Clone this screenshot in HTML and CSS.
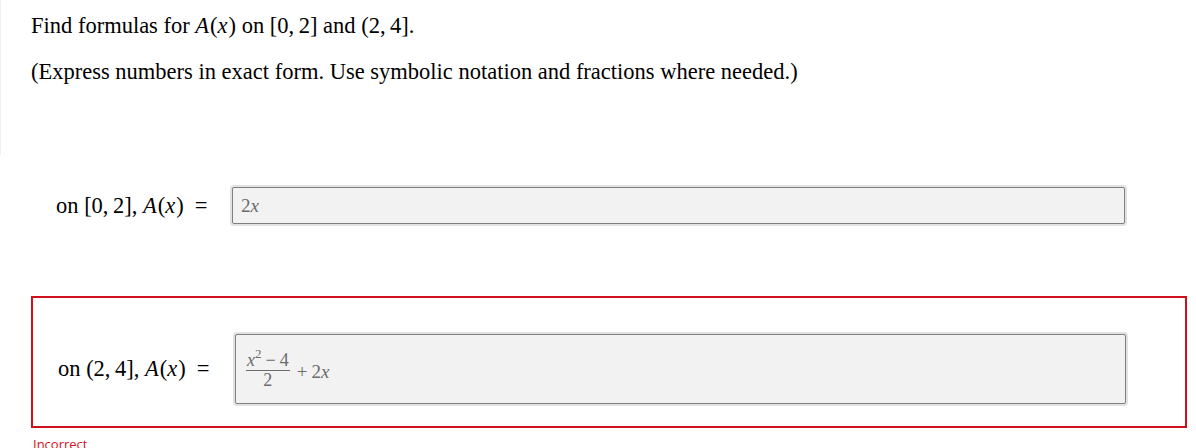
FILE: index.html
```html
<!DOCTYPE html>
<html lang="en">
<head>
  <meta charset="UTF-8" />
  <meta name="viewport" content="width=device-width, initial-scale=1.0" />
  <title>Find formulas for A(x)</title>
  <link rel="stylesheet" href="styles.css">
</head>
<body>
  <!-- Question text -->
  <div class="intro">
    <p class="question">Find formulas for <i>A</i>(<i>x</i>) on [0,&thinsp;2] and (2,&thinsp;4].</p>
    <p class="question">(Express numbers in exact form. Use symbolic notation and fractions where needed.)</p>
  </div>

  <!-- Part 1 -->
  <div class="part">
    <div class="label">on [0,&thinsp;2], <i>A</i>(<i>x</i>)<span class="eq">=</span></div>
    <div class="answer answer-short">
      <span class="math">2<i>x</i></span>
    </div>
  </div>

  <!-- Part 2, marked wrong -->
  <div class="part part-wrong">
    <div class="label">on (2,&thinsp;4], <i>A</i>(<i>x</i>)<span class="eq">=</span></div>
    <div class="answer answer-tall">
      <span class="math">
        <span class="frac">
          <span class="num"><i>x</i><sup>2</sup><span class="op">&minus;</span>4</span>
          <span class="den">2</span>
        </span>
        <span class="op">+</span>2<i>x</i>
      </span>
    </div>
  </div>
  <div class="feedback">Incorrect</div>
</body>
</html>
```

FILE: styles.css
```css
/* Reset */
* {
  margin: 0;
  padding: 0;
  box-sizing: border-box;
}
body {
  font-family: "Liberation Serif", "Times New Roman", serif;
  background-color: #fff;
  color: #000;
  width: 1196px;
  height: 448px;
  overflow: hidden;
}
/* Question block with faint left rule */
.intro {
  height: 155px;
  padding: 13px 0 0 30px;
  border-left: 1px solid #f0f0f0;
}
.question {
  font-size: 22.5px;
  line-height: 26px;
  margin-bottom: 20px;
}
.question i {
  padding-right: 1px;
}
/* Answer rows */
.part {
  display: flex;
  align-items: center;
  margin: 32px 0 0 56px;
}
.label {
  width: 176px;
  font-size: 22.5px;
  white-space: nowrap;
}
.label i {
  padding-right: 1px;
}
.eq {
  margin-left: 10px;
  padding-left: 1px;
}
/* Answer boxes */
.answer {
  width: 893px;
  display: flex;
  align-items: center;
  padding-left: 8px;
  background-color: #f2f2f2;
  border: 1px solid #7f7f7f;
  border-radius: 2px;
  box-shadow: 0 0 0 2px #e2e2e2;
  color: #6b6b6b;
  font-family: "Liberation Serif", "Times New Roman", serif;
}
.answer-short {
  height: 37px;
}
.answer-tall {
  height: 70px;
  width: 891px;
  padding: 6px 0 0 10px;
}
.math {
  display: flex;
  align-items: center;
  font-size: 19px;
}
.math .op {
  margin: 0 4px 0 5px;
}
/* Stacked fraction */
.frac {
  display: inline-flex;
  flex-direction: column;
  align-items: center;
  font-size: 18px;
  line-height: 18px;
  margin-right: 2px;
  position: relative;
  top: -2px;
}
.frac .num {
  border-bottom: 1px solid #6b6b6b;
  padding: 0 1px 1px;
}
.frac .op {
  margin: 0 4px;
}
.frac sup {
  font-size: 13px;
  vertical-align: 8px;
  line-height: 0;
}
/* Incorrect part gets a red frame */
.part-wrong {
  width: 1156px;
  height: 132px;
  margin: 72px 0 0 31px;
  padding: 36px 0 22px 25px;
  border: 2px solid #d0101c;
  align-items: center;
}
.part-wrong .label {
  width: 177px;
}
.feedback {
  margin: 7px 0 0 33px;
  font-family: "Open Sans", "Liberation Sans", sans-serif;
  font-size: 13px;
  color: #d0101c;
}
```
